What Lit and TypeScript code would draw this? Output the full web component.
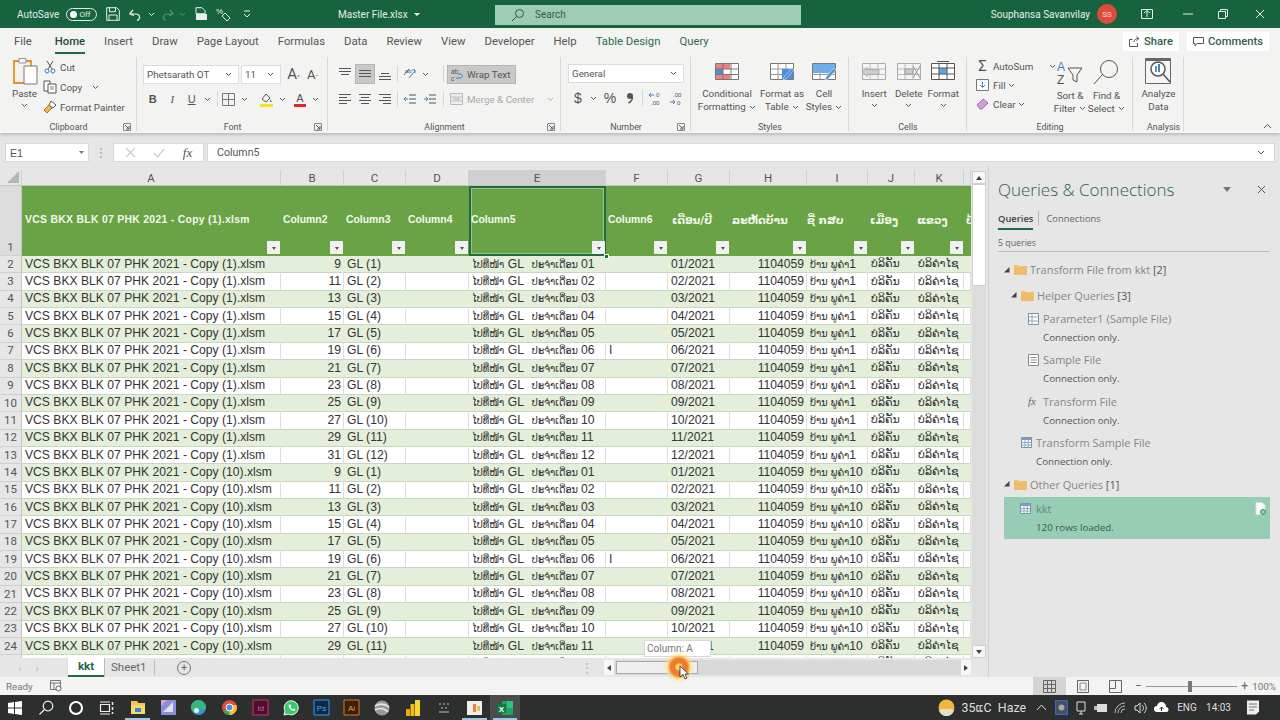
import { LitElement, html, svg, css } from "lit";
import { customElement } from "lit/decorators.js";

const ch = (c = "#555") => html`<svg class="chev" width="7" height="5" viewBox="0 0 7 5"><path d="M1 1l2.500 2.500L6 1" stroke="${c}" fill="none"/></svg>`;
const launcher = html`<svg width="8" height="8" viewBox="0 0 8 8"><path d="M.5.5h7v7h-7z" fill="none" stroke="#888"/><path d="M2 2l3.500 3.500M6 3v3H3" stroke="#555" fill="none"/></svg>`;
const lines = (rows: [number, number][], top = 2.5) => html`<svg width="16" height="14" viewBox="0 0 16 14">${rows.map((r, i) => svg`<path d="M${r[0]} ${i * 3 + top}H${r[1]}" stroke="#555"/>`)}</svg>`;
const folder = html`<svg width="13" height="11" viewBox="0 0 13 11"><path d="M0 2V1h4l1 1h8v9H0z" fill="#f2c26f"/><path d="M0 3h13v8H0z" fill="#efbd69"/></svg>`;
const tree = html`<svg class="tri" width="6" height="6" viewBox="0 0 6 6"><path d="M5.500 0v5.500H0z" fill="#444"/></svg>`;
const tableIcon = html`<svg width="11" height="11" viewBox="0 0 11 11"><path d="M.5.5h10v10H.5z" fill="#fff" stroke="#7590ab"/><path d="M.5.5h10v2.500H.5z" fill="#7e9cc0"/><path d="M4 3v7.500M7.300 3v7.500M.5 5.500h10M.5 8h10" stroke="#8ea6bd"/></svg>`;

const rowsData = Array.from({ length: 24 }, (_, i) => {
  const m = i % 12;
  const first = i < 12;
  const nn = String(m + 1).padStart(2, "0");
  return {
    n: i + 2,
    a: `VCS BKX BLK 07 PHK 2021 - Copy (${first ? 1 : 10}).xlsm`,
    b: 9 + m * 2,
    c: `GL (${m + 1})`,
    nn,
    f: m === 5 ? "I" : "",
    g: `${nn}/2021`,
    h: "1104059",
    vn: first ? 1 : 10,
  };
});
const cols = ["A", "B", "C", "D", "E", "F", "G", "H", "I", "J", "K"];
const heads = ["VCS BKX BLK 07 PHK 2021 - Copy (1).xlsm", "Column2", "Column3", "Column4", "Column5", "Column6", "ເດືອນ/ປີ", "ລະຫັດບ້ານ", "ຊື່ ກສບ", "ເມືອງ", "ແຂວງ"];
const taskIcons = [
  html`<svg width="16" height="16" viewBox="0 0 16 16"><path d="M1 3l6-1v5.600H1zM8 1.900l7-1v6.700H8zM1 8.400h6V14l-6-1zM8 8.400h7v6.700l-7-1z" fill="#fff"/></svg>`,
  html`<svg width="16" height="16" viewBox="0 0 16 16"><circle cx="10" cy="6" r="4.800" fill="none" stroke="#eee" stroke-width="1.200"/><path d="M6.500 9.500L1.500 14.500" stroke="#eee" stroke-width="1.200"/></svg>`,
  html`<svg width="16" height="16" viewBox="0 0 16 16"><circle cx="8" cy="8" r="6" fill="none" stroke="#fff" stroke-width="2"/></svg>`,
  html`<svg width="16" height="16" viewBox="0 0 16 16"><path d="M1.500 4.500h9v7h-9zM1 2h10M1 14h10" fill="none" stroke="#eee" stroke-width="1.200"/><path d="M13.500 2v3M13.500 7v3M13.500 12v2" stroke="#eee" stroke-width="1.500"/></svg>`,
  html`<svg width="16" height="15" viewBox="0 0 16 15"><path d="M1 1h6l1.500 2H15v11H1z" fill="#f5c64c"/><path d="M1 5h14v9H1z" fill="#f9d774"/><path d="M5 8h6v4H5z" fill="#3b88c3"/></svg>`,
  html`<svg width="17" height="17" viewBox="0 0 17 17"><path d="M1 1h15v15H1z" fill="#8b8cdc"/><path d="M3 13L13 3v10z" fill="#eee" opacity=".85"/><path d="M1 1h6L1 7z" fill="#d9a3d6"/></svg>`,
  html`<svg width="17" height="17" viewBox="0 0 17 17"><circle cx="8.500" cy="8.500" r="7.500" fill="#2f9bd0"/><path d="M1 8.500a7.500 7.500 0 0 1 15 0c0 2-4 2-5 1a4 4 0 0 0-6 3c-1 2-4-1-4-4z" fill="#39b67c"/><circle cx="6.500" cy="11.500" r="2.500" fill="#e8f0f0"/></svg>`,
  html`<svg width="17" height="17" viewBox="0 0 17 17"><circle cx="8.500" cy="8.500" r="7.500" fill="#e5493b"/><path d="M8.500 8.500L2 12.200A7.500 7.500 0 0 0 8.500 16z" fill="#3aa757"/><path d="M8.500 8.500V16A7.500 7.500 0 0 0 15.500 6H8.500z" fill="#f6c12c"/><circle cx="8.500" cy="8.500" r="3.500" fill="#4a8ae8" stroke="#fff"/></svg>`,
  html`<svg width="17" height="17" viewBox="0 0 17 17"><path d="M1 1h15v15H1z" fill="#4a1030" stroke="#d3316f"/><text x="8.500" y="12" font-size="8" fill="#e85a94" text-anchor="middle" font-family="Liberation Sans">Id</text></svg>`,
  html`<svg width="18" height="18" viewBox="0 0 18 18"><path d="M2 16l1-4a7 7 0 1 1 3 3z" fill="#36c96a" stroke="#fff"/><path d="M6.500 6c0 3 3 6 6 6l1-1.500-2-1-1 .7c-1-.5-1.700-1.200-2-2l.7-1-1-2z" fill="#fff"/></svg>`,
  html`<svg width="17" height="17" viewBox="0 0 17 17"><path d="M1 1h15v15H1z" fill="#0f2a44" stroke="#2e9bf0"/><text x="8.500" y="12" font-size="8" fill="#47a8f5" text-anchor="middle" font-family="Liberation Sans">Ps</text></svg>`,
  html`<svg width="17" height="17" viewBox="0 0 17 17"><path d="M1 1h15v15H1z" fill="#3c1f08" stroke="#d57d22"/><text x="8.500" y="12" font-size="8" fill="#ef9a37" text-anchor="middle" font-family="Liberation Sans">Ai</text></svg>`,
  html`<svg width="18" height="18" viewBox="0 0 18 18"><circle cx="9" cy="9" r="7.500" fill="#9a9a9a"/><path d="M2 7c5-3 10-2 14 1M2 11c4-2 9-2 13 2" stroke="#e8e8e8" stroke-width="1.500" fill="none"/></svg>`,
  html`<svg width="16" height="18" viewBox="0 0 16 18"><path d="M1 10h4v7H1z" fill="#e9a90f"/><path d="M5.500 5h4v12h-4z" fill="#f2c011"/><path d="M10 1h5v16h-5z" fill="#f7d533"/></svg>`,
  html`<svg width="16" height="16" viewBox="0 0 16 16"><path d="M3 3h2v2H3zM7 3h2v2H7zM11 3h2v2h-2zM5 7h2v2H5zM9 7h2v2H9zM3 11h10v2H3z" fill="#6d7b80"/></svg>`,
  html`<svg width="17" height="16" viewBox="0 0 17 16"><path d="M1 1h15v14H1z" fill="#f2efe8"/><path d="M7 4h3v8H7z" fill="#e8853b"/><path d="M11 6h3v5h-3z" fill="#e0c060"/></svg>`,
  html`<svg width="18" height="16" viewBox="0 0 18 16"><path d="M6 1h11v14H6z" fill="#21a366"/><path d="M11 1h6v7h-6z" fill="#33c481"/><path d="M1 4h9v9H1z" fill="#107c41"/><text x="5.500" y="11.500" font-size="8" font-weight="700" fill="#fff" text-anchor="middle" font-family="Liberation Sans">X</text></svg>`,
];

const tabNames = ["File", "Home", "Insert", "Draw", "Page Layout", "Formulas", "Data", "Review", "View", "Developer", "Help", "Table Design", "Query"];

@customElement("app-root")
export class AppRoot extends LitElement {
  static styles = css`
    :host { display: block; width: 1280px; height: 720px; overflow: hidden; position: relative; background: #e6e6e6; font-family: Roboto, "Liberation Sans", sans-serif; color: #444; }
    * { box-sizing: border-box; }
    svg { display: block; flex: none; }

    .title { height: 28px; background: #17633f; display: grid; grid-template-columns: 65px 32px 9px 14px 4px 22px 10px 2px 20px 8px 5px 20px 2px 20px 7px 14px 84px 157px 306px 291px 5px 20px 15px 30px 8px 36px 34px 40px; align-items: center; color: #dfe9e3; font-size: 10px; white-space: nowrap; }
    .title > * { justify-self: center; }
    .autosave { justify-self: start !important; padding-left: 17px; color: #e2ece6; }
    .toggle { width: 31px; height: 13px; border: 1px solid #e6efe9; border-radius: 7px; display: flex; align-items: center; gap: 3px; padding-left: 3px; font-size: 8px; color: #e6efe9; }
    .toggle i { width: 7px; height: 7px; background: #fff; border-radius: 50%; }
    .filename { justify-self: start !important; color: #e6efe9; display: flex; align-items: center; gap: 6px; }
    .tcaret { width: 0; height: 0; border: 3px solid transparent; border-top: 3px solid #fff; margin-top: 3px; }
    .search { justify-self: stretch !important; height: 20px; background: #9dcbb3; display: flex; align-items: center; gap: 10px; padding-left: 16px; color: #335e4a; font-size: 10px; margin-top: 1px; }
    .user { justify-self: end !important; padding-right: 2px; color: #e9f0ec; }
    .avatar { width: 20px; height: 20px; background: #dd4b39; color: #f9d9d3; border-radius: 50%; font-size: 8px; display: flex; align-items: center; justify-content: center; }

    .tabs { height: 27px; background: #f3f3f1; display: flex; align-items: center; font-size: 11.300px; color: #555; padding-left: 14px; white-space: nowrap; }
    .tab { position: relative; margin-right: 19px; height: 27px; display: flex; align-items: center; }
    .tab.first { margin-right: 23px; }
    .tab.on { color: #1f4d38; font-weight: 500; }
    .tab.on::after { content: ""; position: absolute; left: 0; right: 0; bottom: 1px; height: 2px; background: #1e6c47; }
    .tab.ctx { color: #2b6e4f; }
    .tabs .sp { flex: 1; }
    .tbtn { height: 19px; background: #fff; display: flex; align-items: center; gap: 4px; font-weight: 500; font-size: 11.200px; color: #2c5f49; justify-content: center; }
    .share { width: 56px; margin-right: 8px; }
    .comments { width: 82px; margin-right: 11px; }

    .ribbon { height: 78px; background: #f3f3f1; display: grid; grid-template-columns: 137px 191px 233px 130px 158px 118px 166px 51px 1fr; font-size: 9.800px; color: #555; white-space: nowrap; box-shadow: 0 2px 3px rgba(0,0,0,.18); position: relative; }
    .grp { display: flex; flex-direction: column; position: relative; }
    .grp::after { content: ""; position: absolute; right: 0; top: 2px; bottom: 2px; width: 1px; background: #d8d8d6; }
    .gb { height: 66px; display: flex; flex: none; }
    .gl { height: 12px; display: grid; grid-template-columns: 14px 1fr 14px; align-items: center; text-align: center; font-size: 8.900px; color: #555; }
    .row { display: flex; align-items: center; height: 20px; }
    .col { display: flex; flex-direction: column; }
    .ib { width: 20px; height: 20px; display: flex; align-items: center; justify-content: center; flex: none; }
    .vs { width: 1px; height: 16px; background: #d8d8d6; margin: 0 2px; flex: none; }
    .chev { margin: 0 2px; }
    .dd { height: 19px; background: #fff; border: 1px solid #dcdcdc; display: flex; align-items: center; justify-content: space-between; padding: 0 4px 0 3px; color: #555; font-size: 9.800px; }
    .big { display: flex; flex-direction: column; align-items: center; text-align: center; line-height: 13px; flex: none; }
    .big .ic { height: 32px; display: flex; align-items: center; justify-content: center; }
    .big > .chev { margin-top: 3px; }
    .tx .chev { display: inline-block; vertical-align: middle; margin: 0 0 0 1px; }

    .paste { width: 43px; padding-left: 6px; }
    .clip { padding-top: 2px; }
    .clip .row { gap: 3px; }
    .clip .ib { width: 14px; }
    .font { padding: 9px 0 0 6px; }
    .font .fn { width: 96px; margin-right: 2px; }
    .font .fs { width: 40px; margin-right: 3px; }
    .r2 { margin-top: 5px; }
    .fa { width: 19px; text-align: center; color: #555; flex: none; display: flex; justify-content: center; align-items: baseline; }
    .fa b { font-weight: 400; font-size: 15px; }
    .fa .sm { font-size: 13px; }
    .fa small { font-size: 6px; }
    .fb { font-family: "Liberation Sans"; font-size: 11px; width: 19.500px; }
    .fi2 { font-family: "Liberation Serif"; }
    .font .vs { margin: 0 1px 0 4px; }
    .m7 { margin-left: 7px; }
    .m2 { margin-left: 2px; }
    .m1 { margin-left: 1px; }
    .align { padding: 9px 0 0 7px; }
    .align .sel { background: #c9c9c7; border: 1px solid #b5b5b3; }
    .align .vs2 { margin: 0 3px 0 12px; }
    .align .vs3 { margin: 0 6px 0 3px; }
    .wrap { width: 69px; height: 19px; background: #c9c9c7; border: 1px solid #b5b5b3; display: flex; align-items: center; gap: 4px; padding-left: 3px; flex: none; }
    .merge { color: #aaa; display: flex; align-items: center; gap: 4px; }
    .merge .chev { margin-left: 9px; }
    .num { padding: 9px 0 0 7px; }
    .num .dd { width: 116px; }
    .dollar { font-size: 14px; font-family: "Liberation Sans"; }
    .pctg { font-size: 14px; font-family: "Liberation Sans"; margin-left: 1px; }
    .sty { padding-left: 6px; }
    .cond { width: 60px; }
    .fmt { width: 50px; }
    .cst { width: 34px; }
    .cel { padding-left: 8px; }
    .cel .big { width: 34.500px; }
    .edit { padding: 1.500px 0 0 9px; }
    .edit .l { width: 76px; }
    .edit .row { height: 19px; gap: 4px; }
    .edit .row .chev { margin-left: -2px; }
    .sig { width: 13px; font-size: 15px; }
    .sp10 { margin-left: 14px; }
    .sf { width: 36px; }
    .fi { width: 37px; }
    .ana { justify-content: center; }
    .collapse { display: flex; align-items: flex-end; justify-content: flex-end; padding: 0 8px 4px 0; }

    .fbar { height: 32px; background: #e6e6e6; display: flex; align-items: flex-start; padding: 10px 5px 0 5px; color: #555; font-size: 10.600px; }
    .fbar .box { height: 19px; background: #fff; border: 1px solid #dadada; display: flex; align-items: center; }
    .namebox { width: 84px; justify-content: space-between; padding: 0 4px; font-family: "Liberation Sans"; }
    .dots { width: 24px; display: flex; justify-content: center; color: #aaa; height: 19px; align-items: center; }
    .fx { width: 91px; justify-content: space-around; padding: 0 2px; }
    .fx i { font-family: "Liberation Serif"; font-size: 13px; color: #555; }
    .input { flex: 1; margin-left: 3px; padding: 0 9px; justify-content: space-between; }

    .main { height: 512px; display: flex; background: #e6e6e6; }
    .left { width: 987px; padding-top: 5px; flex: none; }
    .sheetrow { height: 488px; display: flex; }
    .sheet { width: 971px; overflow: hidden; background: #fff; font-family: "Liberation Sans", "DejaVu Sans", sans-serif; font-size: 12.150px; color: #333; flex: none; }
    .r { display: grid; grid-template-columns: 22px 259px 63px 62px 63px 137px 62px 62px 77px 61px 47px 49px 7px; }
    .chead { height: 16px; background: #e6e6e6; font-size: 11.500px; color: #555; border-bottom: 1px solid #c4c4c4; font-family: Roboto; }
    .chead div { display: flex; align-items: center; justify-content: center; border-right: 1px solid #d0d0d0; }
    .chead .on { background: #d0d0d0; }
    .chead .corner { justify-content: flex-end; align-items: flex-end; padding: 0 2px 2px 0; }
    .hrow { height: 70px; }
    .hrow .rn { background: #dcdcdc; align-items: flex-end; padding-bottom: 1px; }
    .hc { background: #6aa345; color: #f3f8ef; font-weight: 700; font-size: 10.400px; display: flex; align-items: center; padding: 0 0 3px 2px; position: relative; overflow: hidden; white-space: nowrap; }
    .hc.first { letter-spacing: .3px; padding-left: 3px; }
    .hc.lao { font-family: "DejaVu Sans", sans-serif; font-size: 10.600px; }
    .hc.p4 { padding-left: 4px; }
    .hc.p0 { padding-left: 0; }
    .hc.sel { overflow: visible; outline: 2px solid #24693f; outline-offset: -2px; box-shadow: inset 0 0 0 2.500px #cfe3c4; z-index: 2; }
    .handle { position: absolute; right: -3px; bottom: -3px; width: 5px; height: 5px; background: #1e6c47; border: 1px solid #fff; }
    .fbtn { position: absolute; right: 1px; bottom: 2px; width: 13px; height: 13px; background: #f1f1f1; display: flex; align-items: center; justify-content: center; }
    .fbtn::after { content: ""; border: 2.500px solid transparent; border-top: 3px solid #555; margin-top: 3px; }
    .rn { background: #e6e6e6; color: #555; font-size: 11.500px; font-family: Roboto; display: flex; align-items: center; justify-content: center; border-right: 1px solid #c4c4c4; border-bottom: 1px solid #d0d0d0; padding-bottom: 1px; }
    .dr { height: 17.360px; }
    .dr .c { border-right: 1px solid #dfdfdf; border-bottom: 1px solid #c9d6c0; padding: 0 2px 1px 3px; overflow: hidden; white-space: nowrap; display: flex; align-items: center; line-height: 1; }
    .dr.band .c { background: #e3efda; border-right-color: #e3efda; }
    .dr .num2 { justify-content: flex-end; }
    .dr .lao { font-family: "DejaVu Sans", sans-serif; font-size: 11px; }
    .lo { font-family: "DejaVu Sans", sans-serif; font-size: 9.700px; }
    .lo2 { margin: 0 3px 0 5px; }
    .vsb { width: 16px; padding: 1px 1px 0 1px; background: #e6e6e6; display: flex; flex-direction: column; }
    .vsb .track { flex: 1; background: #dcdcdc; display: flex; flex-direction: column; }
    .vsb .up, .vsb .dn { height: 13px; background: #f7f7f7; border: 1px solid #cfcfcf; display: flex; align-items: center; justify-content: center; flex: none; }
    .vsb .dn { margin-top: auto; }
    .vsb .thumb { height: 102px; background: #fff; border: 1px solid #cfcfcf; }
    .sheetbar { height: 19px; display: flex; align-items: center; background: #e6e6e6; font-size: 11.500px; position: relative; }
    .arrows { width: 68px; display: flex; gap: 14px; padding-left: 18px; color: #bbb; }
    .kkt { width: 36px; height: 19px; background: #fff; color: #1e6c47; font-weight: 700; border-bottom: 2px solid #1e6c47; display: flex; align-items: center; justify-content: center; margin-top: -1px; box-shadow: 1px 0 0 #bbb, -1px 0 0 #ddd; }
    .s1 { width: 51px; text-align: left; padding-left: 7px; color: #666; border-right: 1px solid #bbb; height: 15px; line-height: 14px; }
    .plus { width: 14px; height: 14px; border: 1px solid #777; border-radius: 50%; margin-left: 22px; display: flex; align-items: center; justify-content: center; color: #666; font-size: 11px; line-height: 1; }
    .sdots { margin-left: 390px; width: 23px; color: #bbb; }
    .hsb { width: 367px; height: 15px; background: #d9d9d9; display: flex; align-items: center; flex: none; }
    .hsb .b { width: 10px; height: 15px; background: #f7f7f7; display: flex; align-items: center; justify-content: center; flex: none; }
    .hsb .t { width: 82px; height: 13px; background: #efefef; border: 1px solid #aaa; margin-left: 2px; }
    .hsb .b.end { margin-left: auto; }
    .tl { width: 0; height: 0; border: 3px solid transparent; border-right: 4px solid #444; margin-left: -3px; }
    .tr { width: 0; height: 0; border: 3px solid transparent; border-left: 4px solid #444; margin-right: -3px; }

    .panel { flex: 1; padding: 9px 10px 0 11px; color: #878787; font-family: "Open Sans", sans-serif; font-size: 11px; white-space: nowrap; position: relative; }
    .panel::before { content: ""; position: absolute; left: 1px; top: 0; bottom: 0; width: 1px; background: #d0d0d0; }
    .ph { height: 30px; display: flex; align-items: center; justify-content: space-between; }
    .ph h1 { margin: 0; font-weight: 300; font-size: 17px; color: #2f5e4a; }
    .ph .hi { display: flex; gap: 26px; align-items: center; padding-right: 4px; }
    .ptabs { height: 24px; margin-top: 2px; display: flex; align-items: center; font-size: 9.400px; color: #666; }
    .ptabs .on { color: #444; font-weight: 600; position: relative; height: 24px; display: flex; align-items: center; margin-right: 5px; }
    .ptabs .on::after { content: ""; position: absolute; left: 0; right: 0; bottom: 0; height: 2px; background: #1e6c47; }
    .ptabs .d { width: 1px; height: 14px; background: #bbb; margin-right: 7px; }
    .count { height: 22px; border-bottom: 1px solid #bdbdbd; font-size: 8.800px; color: #666; display: flex; align-items: center; padding-top: 5px; margin-bottom: 5.500px; }
    .ti { display: flex; align-items: center; gap: 3.500px; height: 24.500px; }
    .ti b { font-weight: 400; color: #555; }
    .t0 { padding-left: 6px; }
    .t1 { padding-left: 13px; height: 26px; }
    .t2 { padding-left: 30px; height: 21px; gap: 4px; }
    .t3 { padding-left: 23px; height: 21px; gap: 4px; }
    .fxi { font-family: "Liberation Serif"; width: 11px; color: #666; }
    .sub { font-size: 9.800px; color: #555; height: 17px; display: flex; align-items: center; margin-bottom: 3.300px; }
    .s2 { padding-left: 45px; }
    .s3 { padding-left: 38px; margin-bottom: 2.300px; }
    .selq { margin: 0 0 0 6px; height: 42px; background: #98cdb5; padding: 2px 4px 0 16px; }
    .selq .ln { display: flex; align-items: center; gap: 5px; height: 20px; color: #5b8a77; }
    .selq .rows { padding-left: 16px; font-size: 9.800px; color: #3b5a4c; height: 17px; display: flex; align-items: center; }
    .selq .end { margin-left: auto; }

    .status { height: 18px; background: #f3f3f1; display: flex; align-items: center; font-size: 9.800px; color: #777; padding-left: 6px; position: relative; white-space: nowrap; }
    .status .mac { margin-left: 17px; }
    .status .sp { flex: 1; }
    .view { width: 33px; height: 18px; display: flex; align-items: center; justify-content: center; }
    .view.on { background: #d4d4d2; }
    .zoom { display: flex; align-items: center; width: 113px; margin-left: 3px; gap: 4px; font-size: 12px; color: #666; }
    .zoom .tr2 { flex: 1; height: 1px; background: #999; position: relative; }
    .zoom .tr2 i { position: absolute; left: 42px; top: -5px; width: 4px; height: 11px; background: #777; }
    .pct { width: 32px; text-align: center; font-size: 9.800px; color: #777; }

    .task { height: 25px; background: #2d2f2f; display: flex; align-items: center; position: relative; color: #dfdfdf; font-size: 10px; white-space: nowrap; }
    .ti2 { width: 30.600px; height: 25px; display: flex; align-items: center; justify-content: center; flex: none; position: relative; }
    .ti2.act { background: #4a4c4c; }
    .ti2.ul::after { content: ""; position: absolute; left: 3px; right: 3px; bottom: 0; height: 2px; background: #9fc8e8; }
    .task .sp { flex: 1; }
    .sys { display: flex; align-items: center; height: 25px; }
    .weather { font-size: 12.400px; font-family: Roboto, "DejaVu Sans", sans-serif; color: #ddd; margin: 0 5px 0 7px; white-space: pre; }
    .tray { width: 20px; display: flex; justify-content: center; }
    .eng { width: 28px; text-align: center; margin-left: 2px; }
    .clock { width: 33px; text-align: center; margin-left: 1px; }
    .note { width: 36px; display: flex; justify-content: center; margin-right: 9px; }

    .tip { position: absolute; left: 644px; top: 640px; width: 67px; height: 17px; background: #fff; border: 1px solid #d8d8d8; font-size: 10px; color: #777; padding-left: 2px; display: flex; align-items: center; }
    .spot { position: absolute; left: 663px; top: 651px; width: 32px; height: 32px; border-radius: 50%; background: radial-gradient(circle, #f9d36b 0 3px, #ee7d2b 4px 8.500px, #f7b25a 10px, rgba(250,225,120,.55) 12px, rgba(250,230,130,0) 16px); }
    .cursor { position: absolute; left: 679px; top: 665px; }
  `;

  private tile(inner: unknown, w = 24, h = 20) {
    return html`<svg width="${w}" height="${h}" viewBox="0 0 24 20">${inner}</svg>`;
  }

  private ribbon() {
    const g = svg`<path d="M.5 2.500h23v16H.5z" fill="#fff" stroke="#777"/><path d="M.5 8h23M.5 13.500h23M8 2.500v16M16 2.500v16" stroke="#999" fill="none"/>`;
    const brush = svg`<path d="M13 19l1-3 8-9 2 2-8 9z" fill="#4a90d9" stroke="#fff" stroke-width=".5"/>`;
    const greyTile = svg`<path d="M.5 2.500h23v16H.5z" fill="#f5f5f5" stroke="#aaa"/><path d="M.5 8h23M.5 13.500h23M8 2.500v16M16 2.500v16" stroke="#bbb" fill="none"/>`;
    return html`
    <div class="ribbon">
      <div class="grp">
        <div class="gb">
          <div class="big paste">
            <div class="ic"><svg width="26" height="30" viewBox="0 0 26 30"><path d="M2 5h17v22H2z" fill="none" stroke="#e88e25" stroke-width="1.800"/><path d="M7 2.500h7V7H7z" fill="#f3f3f1" stroke="#999"/><path d="M12 10h13v18H12z" fill="#fff" stroke="#777"/></svg></div>
            <div class="tx">Paste</div>${ch()}
          </div>
          <div class="col clip">
            <div class="row"><div class="ib"><svg width="12" height="14" viewBox="0 0 12 14"><path d="M3 1l5 8M9 1L4 9" stroke="#555" fill="none"/><circle cx="3" cy="11" r="2" fill="none" stroke="#3f7fc4"/><circle cx="9" cy="11" r="2" fill="none" stroke="#3f7fc4"/></svg></div>Cut</div>
            <div class="row"><div class="ib"><svg width="14" height="14" viewBox="0 0 14 14"><path d="M1 1h6v10H1z" fill="#fff" stroke="#555"/><path d="M5 4h8v9H5z" fill="#fff" stroke="#555"/><path d="M7 7h4M7 9h4" stroke="#888"/></svg></div>Copy&nbsp;&nbsp;${ch()}</div>
            <div class="row"><div class="ib"><svg width="14" height="14" viewBox="0 0 14 14"><path d="M8 1l5 4-3 3-4-3z" fill="#fff" stroke="#555"/><path d="M6 5L1 10l3 3 5-5z" fill="#f2b84f" stroke="#a7742c"/></svg></div>Format Painter</div>
          </div>
        </div>
        <div class="gl"><span></span>Clipboard${launcher}</div>
      </div>

      <div class="grp">
        <div class="gb"><div class="col font">
          <div class="row">
            <div class="dd fn">Phetsarath OT${ch()}</div>
            <div class="dd fs">11${ch()}</div>
            <div class="fa"><b>A</b><small>^</small></div>
            <div class="fa"><b class="sm">A</b><small>ˇ</small></div>
          </div>
          <div class="row r2">
            <div class="ib fb"><b>B</b></div><div class="ib fb"><i class="fi2">I</i></div><div class="ib fb"><u>U</u></div>${ch()}
            <div class="vs"></div>
            <div class="ib"><svg width="13" height="13" viewBox="0 0 13 13"><path d="M.5.5h12v12H.5zM6.500.5v12M.5 6.500h12" stroke="#777" fill="none"/></svg></div>${ch()}
            <div class="ib m7"><svg width="15" height="15" viewBox="0 0 15 15"><path d="M3 7l4-5 4 4-4 4z" fill="#f3f3f1" stroke="#555"/><path d="M11 7l2 3-2 0z" fill="#3f7fc4"/><path d="M1 12h13v3H1z" fill="#f5e11d"/></svg></div>${ch()}
            <div class="ib m2"><svg width="14" height="15" viewBox="0 0 14 15"><text x="7" y="10" font-size="11" text-anchor="middle" fill="#555" font-family="Liberation Sans">A</text><path d="M1 12h12v3H1z" fill="#e0262b"/></svg></div>${ch()}
          </div>
        </div></div>
        <div class="gl"><span></span>Font${launcher}</div>
      </div>

      <div class="grp">
        <div class="gb"><div class="col align">
          <div class="row">
            <div class="ib">${lines([[2, 14], [2, 14], [4, 12]], 1.5)}</div>
            <div class="ib sel">${lines([[2, 14], [2, 14], [2, 14]], 3.5)}</div>
            <div class="ib">${lines([[4, 12], [2, 14], [2, 14]], 6.5)}</div>
            <div class="vs"></div>
            <div class="ib"><svg width="14" height="14" viewBox="0 0 14 14"><path d="M1 8l5-6M6 11l6-7M9 3h3v3" stroke="#3f7fc4" fill="none"/><text x="2" y="6" font-size="6" fill="#555" font-family="Liberation Sans">ab</text></svg></div>${ch()}
            <div class="vs vs2"></div>
            <div class="wrap"><svg width="12" height="13" viewBox="0 0 12 13"><text x="0" y="6" font-size="6.500" fill="#555" font-family="Liberation Sans">ab</text><text x="0" y="12.500" font-size="6.500" fill="#555" font-family="Liberation Sans">c</text><path d="M5 10h4c3 0 3-4 0-4H7" stroke="#3f7fc4" fill="none"/></svg>Wrap Text</div>
          </div>
          <div class="row r2">
            <div class="ib">${lines([[2, 14], [2, 10], [2, 14], [2, 10]])}</div>
            <div class="ib">${lines([[2, 14], [4, 12], [2, 14], [4, 12]])}</div>
            <div class="ib">${lines([[2, 14], [6, 14], [2, 14], [6, 14]])}</div>
            <div class="vs"></div>
            <div class="ib"><svg width="14" height="12" viewBox="0 0 14 12"><path d="M6 2h7M6 6h7M6 10h7" stroke="#555"/><path d="M5 6H1M3 4L1 6l2 2" stroke="#3f7fc4" fill="none"/></svg></div>
            <div class="ib"><svg width="14" height="12" viewBox="0 0 14 12"><path d="M6 2h7M6 6h7M6 10h7" stroke="#555"/><path d="M1 6h4M3 4l2 2-2 2" stroke="#3f7fc4" fill="none"/></svg></div>
            <div class="vs vs3"></div>
            <div class="merge"><svg width="13" height="12" viewBox="0 0 13 12"><path d="M.5.5h12v11H.5zM.5 4h12M.5 8h12" fill="#eee" stroke="#bbb"/><path d="M3 6h7" stroke="#aaa"/></svg>Merge &amp; Center${ch("#aaa")}</div>
          </div>
        </div></div>
        <div class="gl"><span></span>Alignment${launcher}</div>
      </div>

      <div class="grp">
        <div class="gb"><div class="col num">
          <div class="dd">General${ch()}</div>
          <div class="row r2">
            <div class="ib dollar">$</div>${ch()}
            <div class="ib pctg">%</div>
            <div class="ib"><svg width="8" height="12" viewBox="0 0 8 12"><circle cx="4" cy="4" r="3" fill="#555"/><path d="M6.500 5c0 3-2 5-4 6" stroke="#555" stroke-width="1.400" fill="none"/></svg></div>
            <div class="vs"></div>
            <div class="ib"><svg width="15" height="15" viewBox="0 0 15 15"><path d="M6 4H1M3 2L1 4l2 2" stroke="#3f7fc4" fill="none"/><text x="8" y="6" font-size="6" fill="#555" font-family="Liberation Sans">0</text><text x="3" y="13.500" font-size="6" fill="#555" font-family="Liberation Sans">.00</text></svg></div>
            <div class="ib m1"><svg width="15" height="15" viewBox="0 0 15 15"><text x="4" y="6" font-size="6" fill="#555" font-family="Liberation Sans">.00</text><path d="M1 11h5M4 9l2 2-2 2" stroke="#3f7fc4" fill="none"/><text x="8" y="13.500" font-size="6" fill="#555" font-family="Liberation Sans">0</text></svg></div>
          </div>
        </div></div>
        <div class="gl"><span></span>Number${launcher}</div>
      </div>

      <div class="grp">
        <div class="gb sty">
          <div class="big cond"><div class="ic">${this.tile(svg`<path d="M.5 2.500h23v16H.5z" fill="#fff" stroke="#777"/><path d="M1 3h14v5H1zM1 13.500h14V18H1z" fill="#ef8080"/><path d="M1 8h7v5.500H1z" fill="#4a90d9"/><path d="M.5 8h23M.5 13.500h23M8 2.500v16M16 2.500v16" stroke="#777" fill="none"/>`)}</div><div class="tx">Conditional<br />Formatting ${ch()}</div></div>
          <div class="big fmt"><div class="ic">${this.tile(svg`${g}<path d="M12 8h11v10H12z" fill="#4a90d9"/>${brush}`)}</div><div class="tx">Format as<br />Table ${ch()}</div></div>
          <div class="big cst"><div class="ic">${this.tile(svg`${g}<path d="M1 3h22v9H1z" fill="#6faee8"/>${brush}`)}</div><div class="tx">Cell<br />Styles ${ch()}</div></div>
        </div>
        <div class="gl"><span></span>Styles<span></span></div>
      </div>

      <div class="grp">
        <div class="gb cel">
          <div class="big"><div class="ic">${this.tile(svg`${greyTile}<path d="M0 10.500l5-4v2h12v5H5v2z" fill="#ccc" stroke="#999" stroke-width=".7"/>`)}</div><div class="tx">Insert</div>${ch()}</div>
          <div class="big"><div class="ic">${this.tile(svg`${greyTile}<path d="M8 8h8v5H8zM16 5l7 12M23 5l-7 12" fill="#ccc" stroke="#999"/>`)}</div><div class="tx">Delete</div>${ch()}</div>
          <div class="big"><div class="ic">${this.tile(svg`<path d="M.5 2.500h23v16H.5z" fill="#fff" stroke="#555"/><path d="M8 7h8v6H8z" fill="#5aa7ea"/><path d="M.5 7h23M.5 13h23M8 2.500v16M16 2.500v16M6 .5h12" stroke="#555" fill="none"/>`)}</div><div class="tx">Format</div>${ch()}</div>
        </div>
        <div class="gl"><span></span>Cells<span></span></div>
      </div>

      <div class="grp">
        <div class="gb edit">
          <div class="col l">
            <div class="row"><div class="ib sig">Σ</div>AutoSum<span class="sp10">${ch()}</span></div>
            <div class="row"><svg width="13" height="12" viewBox="0 0 13 12"><path d="M.5.5h12v11H.5z" fill="#fff" stroke="#777"/><path d="M6.500 3v5M4 6l2.500 2.500L9 6" stroke="#3f7fc4" fill="none"/></svg>Fill${ch()}</div>
            <div class="row"><svg width="13" height="12" viewBox="0 0 13 12"><path d="M1 7l6-6 5 4-6 6H4z" fill="#cf9fd8" stroke="#a46fb0"/></svg>Clear${ch()}</div>
          </div>
          <div class="big sf"><div class="ic"><svg width="26" height="26" viewBox="0 0 26 26"><text x="0" y="11" font-size="12" fill="#3f7fc4" font-family="Liberation Sans">A</text><text x="0" y="24" font-size="12" fill="#555" font-family="Liberation Sans">Z</text><path d="M11 8h14l-5 7v7l-4-2v-5z" fill="none" stroke="#555"/></svg></div><div class="tx">Sort &amp;<br />Filter ${ch()}</div></div>
          <div class="big fi"><div class="ic"><svg width="27" height="27" viewBox="0 0 27 27"><circle cx="16" cy="10" r="8.500" fill="none" stroke="#555"/><path d="M9 16L1 25" stroke="#555"/></svg></div><div class="tx">Find &amp;<br />Select ${ch()}</div></div>
        </div>
        <div class="gl"><span></span>Editing<span></span></div>
      </div>

      <div class="grp">
        <div class="gb ana">
          <div class="big"><div class="ic"><svg width="28" height="28" viewBox="0 0 28 28"><path d="M1.500 1.500h25v25h-25z" fill="#f5f5f5" stroke="#666"/><path d="M1 3h26" stroke="#666" stroke-width="2"/><circle cx="14" cy="12" r="7" fill="#fff" stroke="#555" stroke-width="1.500"/><path d="M11 9h2v6h-2z" fill="#6b8fb5"/><path d="M14 7h2v8h-2z" fill="#3f7fc4"/><path d="M19 17l7 8" stroke="#555" stroke-width="1.500"/></svg></div><div class="tx">Analyze<br />Data</div></div>
        </div>
        <div class="gl"><span></span>Analysis<span></span></div>
      </div>
      <div class="collapse"><svg width="9" height="6" viewBox="0 0 9 6"><path d="M1 5l3.500-3.500L8 5" stroke="#555" fill="none"/></svg></div>
    </div>`;
  }

  private sheet() {
    return html`
    <div class="sheet">
      <div class="r chead">
        <div class="corner"><svg width="12" height="12" viewBox="0 0 12 12"><path d="M12 0v12H0z" fill="#b6b6b6"/></svg></div>
        ${cols.map((c) => html`<div class="${c === "E" ? "on" : ""}">${c}</div>`)}<div></div>
      </div>
      <div class="r hrow">
        <div class="rn">1</div>
        ${heads.map((h, i) => html`<div class="hc ${i === 0 ? "first" : ""} ${i >= 6 ? "lao" : ""} ${i === 6 ? "p4" : ""} ${i === 8 ? "p0" : ""} ${i === 4 ? "sel" : ""}">${h}<span class="fbtn"></span>${i === 4 ? html`<span class="handle"></span>` : ""}</div>`)}
        <div class="hc lao">ບ້ານ</div>
      </div>
      ${rowsData.map((d, i) => html`
        <div class="r dr ${i % 2 === 0 ? "band" : ""}">
          <div class="rn">${d.n}</div>
          <div class="c">${d.a}</div>
          <div class="c num2">${d.b}</div>
          <div class="c">${d.c}</div>
          <div class="c"></div>
          <div class="c"><span><span class="lo">ໄປທີ່ໜ້າ</span> GL <span class="lo lo2">ປະຈຳເດືອນ</span>${d.nn}</span></div>
          <div class="c">${d.f}</div>
          <div class="c">${d.g}</div>
          <div class="c num2">${d.h}</div>
          <div class="c"><span><span class="lo">ບ້ານ ພູຄຳ</span>${d.vn}</span></div>
          <div class="c lao">ບໍລິຄັນ</div>
          <div class="c lao">ບໍລິຄຳໄຊ</div>
          <div class="c"></div>
        </div>`)}
    </div>`;
  }

  private panel() {
    return html`
    <div class="panel">
      <div class="ph"><h1>Queries &amp; Connections</h1>
        <div class="hi"><svg width="8" height="5" viewBox="0 0 8 5"><path d="M0 0h8L4 5z" fill="#777"/></svg><svg width="9" height="9" viewBox="0 0 9 9"><path d="M1 1l7 7M8 1L1 8" stroke="#555"/></svg></div>
      </div>
      <div class="ptabs"><span class="on">Queries</span><span class="d"></span><span>Connections</span></div>
      <div class="count">5 queries</div>
      <div class="ti t0">${tree}${folder}<span>Transform File from kkt <b>[2]</b></span></div>
      <div class="ti t1">${tree}${folder}<span>Helper Queries <b>[3]</b></span></div>
      <div class="ti t2"><svg width="11" height="12" viewBox="0 0 11 12"><path d="M.5.5h10v11H.5z" fill="#fff" stroke="#7590ab"/><path d="M4 .5v11M.5 4h10M.5 8h10" stroke="#8ea6bd"/></svg><span>Parameter1 (Sample File)</span></div>
      <div class="sub s2">Connection only.</div>
      <div class="ti t2"><svg width="11" height="12" viewBox="0 0 11 12"><path d="M.5.5h10v11H.5z" fill="#fff" stroke="#888"/><path d="M2.500 3.500h6M2.500 6h6M2.500 8.500h6" stroke="#888"/></svg><span>Sample File</span></div>
      <div class="sub s2">Connection only.</div>
      <div class="ti t2"><i class="fxi">fx</i><span>Transform File</span></div>
      <div class="sub s2">Connection only.</div>
      <div class="ti t3">${tableIcon}<span>Transform Sample File</span></div>
      <div class="sub s3">Connection only.</div>
      <div class="ti t0">${tree}${folder}<span>Other Queries <b>[1]</b></span></div>
      <div class="selq">
        <div class="ln">${tableIcon}<span>kkt</span><svg class="end" width="11" height="13" viewBox="0 0 11 13"><path d="M1 .5h6l3 3v9H1z" fill="#fff" stroke="#ddd"/><circle cx="8" cy="10" r="2.500" fill="#98cdb5" stroke="#3a8a66"/></svg></div>
        <div class="rows">120 rows loaded.</div>
      </div>
    </div>`;
  }

  render() {
    const e = html`<span></span>`;
    return html`
    <div class="title">
      <span class="autosave">AutoSave</span>
      <span class="toggle"><i></i>Off</span>
      ${e}
      <svg width="14" height="14" viewBox="0 0 14 14"><path d="M.7.7h10l2.600 2.600v10H.7z" fill="none" stroke="#e6efe9"/><path d="M3.500.7v4h6v-4M3 13v-5h8v5" fill="none" stroke="#e6efe9"/></svg>
      ${e}
      <svg width="14" height="13" viewBox="0 0 14 13"><path d="M1.500 6L5 2M1.500 6L6 7.500M1.500 6H8c4 0 5 5 1 6.500" fill="none" stroke="#e6efe9" stroke-width="1.200"/></svg>
      ${ch("#e6efe9")}
      ${e}
      <svg width="14" height="13" viewBox="0 0 14 13" opacity=".3"><path d="M12.500 6L9 2M12.500 6L8 7.500M12.500 6H6c-4 0-5 5-1 6.500" fill="none" stroke="#e6efe9" stroke-width="1.200"/></svg>
      <svg width="7" height="5" viewBox="0 0 7 5" opacity=".3"><path d="M1 1l2.500 2.500L6 1" stroke="#e6efe9" fill="none"/></svg>
      ${e}
      <svg width="13" height="14" viewBox="0 0 13 14"><path d="M1 .7h6l3 3v3H1z" fill="none" stroke="#e6efe9"/><path d="M1 7h11v6H1z" fill="#e6efe9"/></svg>
      ${e}
      <svg width="15" height="15" viewBox="0 0 15 15"><text x="0" y="7" font-size="8" fill="#e6efe9" font-family="Liberation Sans">%</text><path d="M6 9l3-3 5 5-3 3z" fill="none" stroke="#e6efe9"/></svg>
      ${e}
      <svg width="8" height="8" viewBox="0 0 8 8"><path d="M1 1h6M1 4l3 3 3-3" fill="none" stroke="#e6efe9"/></svg>
      ${e}
      <span class="filename">Master File.xlsx<i class="tcaret"></i></span>
      <div class="search"><svg width="14" height="14" viewBox="0 0 14 14"><circle cx="8.500" cy="5.500" r="4" fill="none" stroke="#2d5a46"/><path d="M5.500 8.500L1 13" stroke="#2d5a46"/></svg>Search</div>
      <span class="user">Souphansa Savanvilay</span>
      ${e}
      <span class="avatar">SS</span>
      ${e}
      <svg width="12" height="10" viewBox="0 0 12 10"><path d="M.5.5h11v9H.5z" fill="none" stroke="#e6efe9"/><path d="M3 4l3-2.500L9 4M6 2v6" stroke="#e6efe9" fill="none"/></svg>
      ${e}
      <svg width="10" height="2" viewBox="0 0 10 2"><path d="M0 1h10" stroke="#e6efe9"/></svg>
      <svg width="10" height="10" viewBox="0 0 10 10"><path d="M.5 2.500h7v7h-7zM2.500 2.500v-2h7v7h-2" fill="none" stroke="#e6efe9"/></svg>
      <svg width="10" height="10" viewBox="0 0 10 10"><path d="M1 1l8 8M9 1L1 9" stroke="#e6efe9"/></svg>
    </div>
    <div class="tabs">
      ${tabNames.map((t) => html`<div class="tab ${t === "File" ? "first" : ""} ${t === "Home" ? "on" : ""} ${t === "Table Design" || t === "Query" ? "ctx" : ""}">${t}</div>`)}
      <div class="sp"></div>
      <div class="tbtn share"><svg width="11" height="11" viewBox="0 0 11 11"><path d="M.5 3.500h3M.5 3.500v7h8V7M5 6c0-2 2-3.500 4-3.500M7.500.5l2.500 2-2.500 2" fill="none" stroke="#555"/></svg>Share</div>
      <div class="tbtn comments"><svg width="11" height="10" viewBox="0 0 11 10"><path d="M.5.5h10v6H4l-2 2.500V6.500H.5z" fill="none" stroke="#555"/></svg>Comments</div>
    </div>
    ${this.ribbon()}
    <div class="fbar">
      <div class="box namebox">E1 <svg width="5" height="3" viewBox="0 0 5 3"><path d="M0 0h5L2.500 3z" fill="#777"/></svg></div>
      <div class="dots"><svg width="2" height="10" viewBox="0 0 2 10"><path d="M0 0h2v2H0zM0 4h2v2H0zM0 8h2v2H0z" fill="#bbb"/></svg></div>
      <div class="box fx">
        <svg width="11" height="11" viewBox="0 0 11 11"><path d="M1 1l9 9M10 1l-9 9" stroke="#ccc" stroke-width="1.200"/></svg>
        <svg width="12" height="10" viewBox="0 0 12 10"><path d="M1 5l3.500 4L11 1" stroke="#ccc" stroke-width="1.200" fill="none"/></svg>
        <i>fx</i>
      </div>
      <div class="box input"><span>Column5</span><svg width="8" height="5" viewBox="0 0 8 5"><path d="M1 1l3 3 3-3" stroke="#555" fill="none"/></svg></div>
    </div>
    <div class="main">
      <div class="left">
        <div class="sheetrow">
          ${this.sheet()}
          <div class="vsb">
            <div class="track">
              <div class="up"><svg width="6" height="4" viewBox="0 0 6 4"><path d="M3 0l3 4H0z" fill="#444"/></svg></div>
              <div class="thumb"></div>
              <div class="dn"><svg width="6" height="4" viewBox="0 0 6 4"><path d="M3 4l3-4H0z" fill="#444"/></svg></div>
            </div>
          </div>
        </div>
        <div class="sheetbar">
          <div class="arrows"><span>‹</span><span>›</span></div>
          <div class="kkt">kkt</div>
          <div class="s1">Sheet1</div>
          <div class="plus">+</div>
          <div class="sdots">⋮</div>
          <div class="hsb"><div class="b"><i class="tl"></i></div><div class="t"></div><div class="b end"><i class="tr"></i></div></div>
        </div>
      </div>
      ${this.panel()}
    </div>
    <div class="status">
      Ready
      <svg class="mac" width="12" height="12" viewBox="0 0 12 12"><path d="M.5.5h10v9H.5zM.5 3h10M4 3v6.500" fill="none" stroke="#777"/><circle cx="8.500" cy="8.500" r="2.500" fill="#f3f3f1" stroke="#666"/></svg>
      <div class="sp"></div>
      <div class="view on"><svg width="13" height="13" viewBox="0 0 13 13"><path d="M.5.5h12v12H.5zM4.500.5v12M8.500.5v12M.5 4.500h12M.5 8.500h12" fill="none" stroke="#666"/></svg></div>
      <div class="view"><svg width="12" height="13" viewBox="0 0 12 13"><path d="M.5.5h11v12H.5z" fill="none" stroke="#666"/><path d="M3 3h6v7H3z" fill="none" stroke="#888"/></svg></div>
      <div class="view"><svg width="13" height="13" viewBox="0 0 13 13"><path d="M.5.5h12v12H.5zM6.500.5v8H.5" fill="none" stroke="#666"/></svg></div>
      <div class="zoom"><span>−</span><div class="tr2"><i></i></div><span>+</span></div>
      <div class="pct">100%</div>
    </div>
    <div class="task">
      ${taskIcons.map((ic, i) => html`<div class="ti2 ${i === 16 ? "act" : ""} ${i === 4 || i === 15 || i === 16 ? "ul" : ""}">${ic}</div>`)}
      <div class="sp"></div>
      <div class="sys">
        <svg width="17" height="19" viewBox="0 0 17 19"><circle cx="8.500" cy="9.500" r="8" fill="#f1b73d"/><path d="M1 12c3-2 5-1 7-1s5-1 8 1c-1 4-4 6-7.500 6S2 16 1 12z" fill="#e8ddc5"/></svg>
        <span class="weather">35ແC  Haze</span>
        <div class="tray"><svg width="11" height="7" viewBox="0 0 11 7"><path d="M1 6l4.500-5L10 6" stroke="#ddd" fill="none"/></svg></div>
        <div class="tray"><svg width="13" height="15" viewBox="0 0 13 15"><path d="M.5.5h12v14H.5z" fill="#46505e" stroke="#3b62d8"/><circle cx="6.500" cy="7.500" r="3" fill="#aaa"/></svg></div>
        <div class="tray"><svg width="12" height="14" viewBox="0 0 12 14"><path d="M2 1h8v9H2zM4 13h4M6 10v3" stroke="#ddd" fill="none"/></svg></div>
        <div class="tray"><svg width="14" height="11" viewBox="0 0 14 11"><path d="M3 2h10v8H3z" fill="#ddd"/><path d="M0 4h3v4H0z" fill="#bbb"/></svg></div>
        <div class="tray"><svg width="14" height="12" viewBox="0 0 14 12"><path d="M1 11A10 10 0 0 1 11 1M4 11a7 7 0 0 1 7-7M7 11a4 4 0 0 1 4-4" stroke="#bbb" fill="none"/></svg></div>
        <div class="tray"><svg width="14" height="12" viewBox="0 0 14 12"><path d="M1 4h2l3-3v10L3 8H1z" fill="none" stroke="#ddd"/><path d="M8 3c2 2 2 4 0 6M10 1c3 3 3 7 0 10" stroke="#ddd" fill="none"/></svg></div>
        <div class="tray"><svg width="15" height="11" viewBox="0 0 15 11"><path d="M3 10a3 3 0 0 1 0-6 4.500 4.500 0 0 1 9 1 2.500 2.500 0 0 1 0 5z" fill="#fff"/><path d="M7.500 9V5M5.500 7l2-2 2 2" stroke="#2d2f2f" fill="none"/></svg></div>
        <span class="eng">ENG</span>
        <span class="clock">14:03</span>
        <div class="note"><svg width="14" height="15" viewBox="0 0 14 15"><path d="M1 .5h12v11l-3 3H1z" fill="#eee"/><path d="M3 4h8M3 7h8M3 10h5" stroke="#777"/></svg></div>
      </div>
    </div>
    <div class="tip">Column: A</div>
    <div class="spot"></div>
    <svg class="cursor" width="10" height="15" viewBox="0 0 10 15"><path d="M1 1v11l3-2.500 2 4.500 2-1-2-4h3.500z" fill="#fff" stroke="#222" stroke-width=".8"/></svg>
    `;
  }
}
